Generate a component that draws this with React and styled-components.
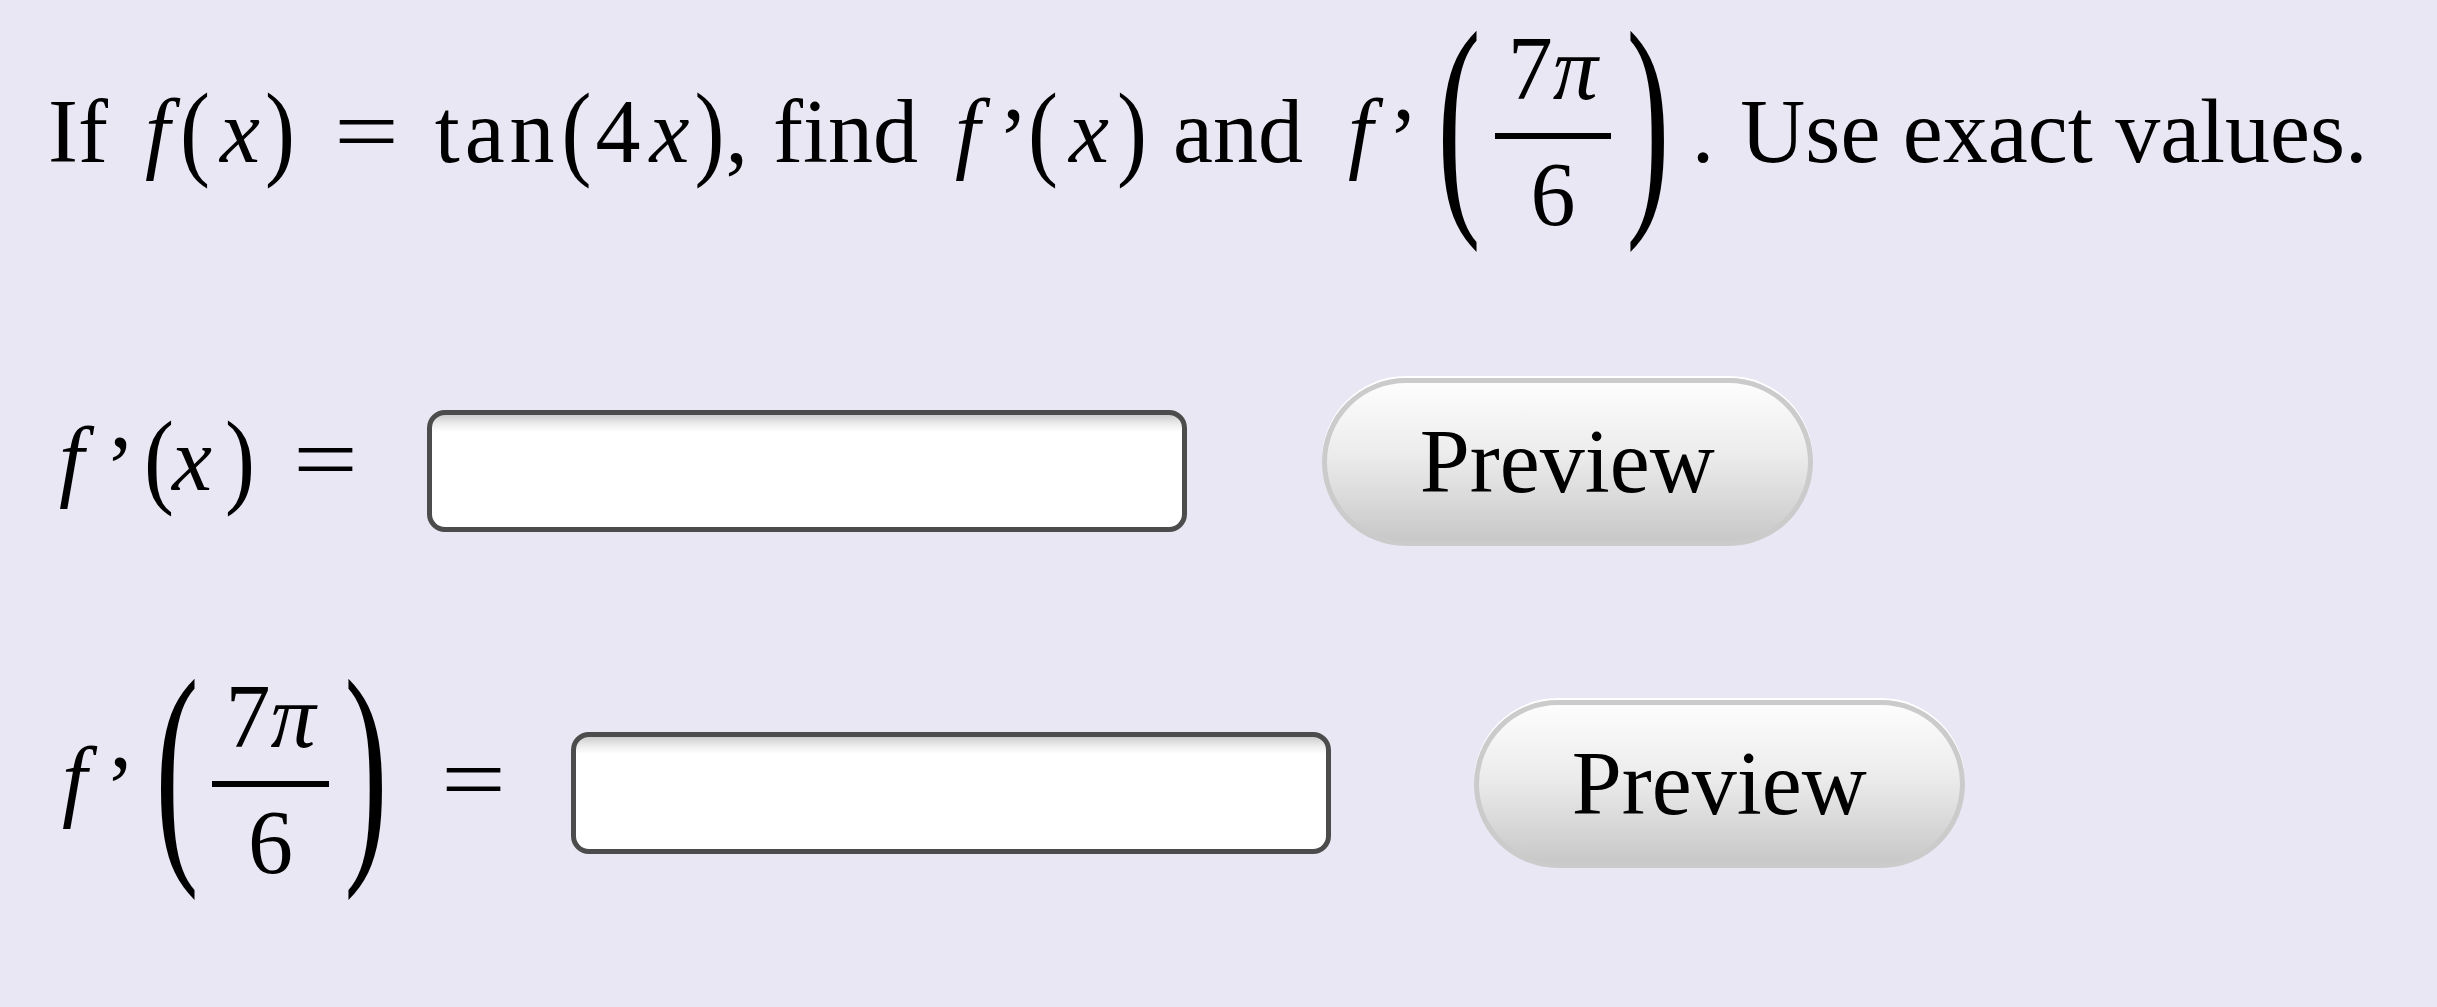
import styled, { createGlobalStyle } from "styled-components"

const Global = createGlobalStyle`
  html, body {
    margin: 0;
    padding: 0;
    background: #e9e7f4;
  }
  body {
    font-family: "Liberation Serif", "Times New Roman", serif;
    color: #000;
  }
`

const Page = styled.main`
  min-height: 100vh;
  padding-left: 48px;
  display: flex;
  flex-direction: column;
  font-size: 90px;
  line-height: 1;
`

const Question = styled.div`
  height: 263px;
  display: flex;
  align-items: center;
  white-space: pre;
`

const Word = styled.span`
  display: inline-block;
  margin-left: ${({ $ml = 0 }) => $ml}px;
`

const MathText = styled(Word)`
  letter-spacing: 5px;
`

const Var = styled(Word)`
  font-style: italic;
`

const Prime = styled(Word)`
  transform: translateY(8px);
`

const Paren = styled(Word)`
  transform: scaleY(1.17);
  transform-origin: 50% 53px;
`

const BigParen = styled(Word)`
  transform: scale(1.45, 2.72);
  transform-origin: 50% 53px;
`

const Equals = styled(Word)`
  transform: scaleX(1.28);
`

const Frac = styled.span`
  display: inline-flex;
  flex-direction: column;
  align-items: center;
  width: ${({ $w }) => $w}px;
  margin-left: ${({ $ml = 0 }) => $ml}px;
`

const Num = styled.span`
  padding-bottom: 19px;
`

const Bar = styled.span`
  align-self: stretch;
  height: 6px;
  background: #000;
`

const Den = styled.span`
  padding-top: 11px;
`

const AnswerRow = styled.div`
  display: flex;
  align-items: center;
  margin-top: ${({ $mt }) => $mt}px;
`

const Label = styled.div`
  display: inline-flex;
  align-items: center;
  margin-bottom: ${({ $mb }) => $mb}px;
`

const AnswerBox = styled.input`
  box-sizing: border-box;
  width: 760px;
  height: 122px;
  margin: 0 0 0 ${({ $ml }) => $ml}px;
  padding: 0 18px;
  border: 5px solid #4c4c4c;
  border-radius: 18px;
  background: linear-gradient(to bottom, #cdcdcd 0, #ededed 9px, #fff 17px);
  font-family: "Liberation Serif", serif;
  font-size: 48px;
  outline: none;
`

const PreviewButton = styled.button`
  box-sizing: border-box;
  width: 491px;
  height: 168px;
  margin: 0 0 18px ${({ $ml }) => $ml}px;
  padding: 0;
  display: flex;
  align-items: center;
  justify-content: center;
  border: 5px solid #cbcbcb;
  border-radius: 84px;
  background: linear-gradient(to bottom, #fdfdfd 0%, #ececec 45%, #c8c8c8 100%);
  box-shadow: 0 -2px 0 #ffffff;
  font-family: "Liberation Serif", "Times New Roman", serif;
  font-size: 90px;
  line-height: 1;
  color: #000;
  cursor: pointer;
`

function SevenPiOverSix({ ml, w }) {
  return (
    <Frac $ml={ml} $w={w}>
      <Num>
        7<Var>π</Var>
      </Num>
      <Bar />
      <Den>6</Den>
    </Frac>
  )
}

export default function App() {
  return (
    <>
      <Global />
      <Page>
        <Question>
          <Word>If</Word>
          <Var $ml={37}>f</Var>
          <Paren $ml={10}>(</Paren>
          <Var $ml={10}>x</Var>
          <Paren $ml={5}>)</Paren>
          <Equals $ml={46}>=</Equals>
          <MathText $ml={43}>tan</MathText>
          <Paren $ml={2}>(</Paren>
          <Word $ml={4}>4</Word>
          <Var $ml={9}>x</Var>
          <Paren $ml={5}>)</Paren>
          <Word $ml={1}>,</Word>
          <Word $ml={25}>find</Word>
          <Var $ml={37}>f</Var>
          <Prime $ml={18}>’</Prime>
          <Paren $ml={0}>(</Paren>
          <Var $ml={11}>x</Var>
          <Paren $ml={8}>)</Paren>
          <Word $ml={26}>and</Word>
          <Var $ml={45}>f</Var>
          <Prime $ml={15}>’</Prime>
          <BigParen $ml={26}>(</BigParen>
          <SevenPiOverSix ml={21} w={116} />
          <BigParen $ml={22}>)</BigParen>
          <Word $ml={29}>.</Word>
          <Word $ml={26}>Use exact values.</Word>
        </Question>

        <AnswerRow $mt={115}>
          <Label $mb={23}>
            <Var $ml={11}>f</Var>
            <Prime $ml={21}>’</Prime>
            <Paren $ml={9}>(</Paren>
            <Var $ml={-2}>x</Var>
            <Paren $ml={13}>)</Paren>
            <Equals $ml={45}>=</Equals>
          </Label>
          <AnswerBox type="text" $ml={76} />
          <PreviewButton type="button" $ml={135}>Preview</PreviewButton>
        </AnswerRow>

        <AnswerRow $mt={108}>
          <Label $mb={25}>
            <Var $ml={14}>f</Var>
            <Prime $ml={18}>’</Prime>
            <BigParen $ml={27}>(</BigParen>
            <SevenPiOverSix ml={20} w={117} />
            <BigParen $ml={22}>)</BigParen>
            <Equals $ml={67}>=</Equals>
          </Label>
          <AnswerBox type="text" $ml={72} />
          <PreviewButton type="button" $ml={143}>Preview</PreviewButton>
        </AnswerRow>
      </Page>
    </>
  )
}
